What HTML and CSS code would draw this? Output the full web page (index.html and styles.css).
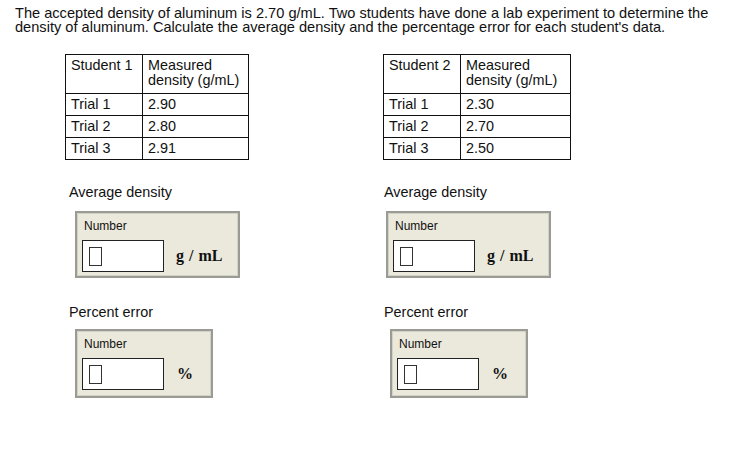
FILE: index.html
```html
<!DOCTYPE html>
<html>
<head>
<meta charset="utf-8">
<link rel="stylesheet" href="styles.css">
</head>
<body>
<p class="intro">The accepted density of aluminum is 2.70 g/mL. Two students have done a lab experiment to determine the density of aluminum. Calculate the average density and the percentage error for each student's data.</p>
<div class="columns">
  <div class="col">
    <table class="data">
      <tr><td class="c1">Student 1</td><td class="c2">Measured density (g/mL)</td></tr>
      <tr><td>Trial 1</td><td>2.90</td></tr>
      <tr><td>Trial 2</td><td>2.80</td></tr>
      <tr><td>Trial 3</td><td>2.91</td></tr>
    </table>
    <div class="label">Average density</div>
    <div class="panel">
      <div class="num">Number</div>
      <div class="row">
        <div class="input"><span class="caret"></span></div>
        <span class="unit">g / mL</span>
      </div>
    </div>
    <div class="label label--pct">Percent error</div>
    <div class="panel panel--pct">
      <div class="num">Number</div>
      <div class="row">
        <div class="input"><span class="caret"></span></div>
        <span class="unit unit--pct">%</span>
      </div>
    </div>
  </div>
  <div class="col col--right">
    <table class="data data--wide">
      <tr><td class="c1">Student 2</td><td class="c2">Measured density (g/mL)</td></tr>
      <tr><td>Trial 1</td><td>2.30</td></tr>
      <tr><td>Trial 2</td><td>2.70</td></tr>
      <tr><td>Trial 3</td><td>2.50</td></tr>
    </table>
    <div class="label">Average density</div>
    <div class="panel">
      <div class="num">Number</div>
      <div class="row">
        <div class="input"><span class="caret"></span></div>
        <span class="unit">g / mL</span>
      </div>
    </div>
    <div class="label label--pct">Percent error</div>
    <div class="panel panel--pct panel--shift">
      <div class="num">Number</div>
      <div class="row">
        <div class="input"><span class="caret"></span></div>
        <span class="unit unit--pct">%</span>
      </div>
    </div>
  </div>
</div>
</body>
</html>
```
FILE: styles.css
```css
html, body {
  margin: 0;
  background: #fff;
  color: #111;
  font-family: "Liberation Sans", Arial, sans-serif;
}
.intro {
  margin: 0;
  padding: 6px 15px 0 15px;
  font-size: 14.6px;
  line-height: 14px;
  width: 715px;
}
.columns {
  display: grid;
  grid-template-columns: 318px 1fr;
  padding-left: 65px;
  margin-top: 20px;
}
.col {
  display: flex;
  flex-direction: column;
  align-items: flex-start;
}
.data {
  border-collapse: collapse;
  font-size: 14.4px;
  line-height: 15px;
  width: 184px;
}
.data--wide { width: 188px; }
.data td {
  border: 1px solid #111;
  padding: 3px 5px;
  height: 15px;
  vertical-align: top;
}
.data tr:first-child td { padding-top: 3px; padding-bottom: 5px; }
.data .c1 { width: 66px; }
.label {
  font-size: 14.4px;
  line-height: 16px;
  margin: 24px 0 0 4px;
}
.label--pct { margin-top: 26px; }
.col--right .label { margin-left: 1px; }
.panel {
  margin: 11px 0 0 10px;
  background: #ebe9dc;
  border: 2px solid #9b9b95;
  box-shadow: inset 0 0 0 1px #d4d2c6;
  padding: 6px 16px 4px 5px;
}
.panel--pct {
  margin-top: 9px;
  padding-bottom: 6px;
}
.col--right .panel { margin-left: 3px; }
.col--right .panel--shift { margin-left: 7px; }
.num {
  font-size: 12px;
  line-height: 14px;
  padding-left: 2px;
  margin-bottom: 7px;
}
.row {
  display: flex;
  align-items: center;
  gap: 12px;
}
.input {
  height: 30px;
  background: #fff;
  border: 1px solid #222;
  display: flex;
  align-items: center;
  padding-left: 6px;
  box-sizing: content-box;
  width: 74px;
}
.caret {
  width: 11px;
  height: 17px;
  border: 1px solid #333;
}
.unit {
  font-family: "Liberation Serif", "Times New Roman", serif;
  font-weight: bold;
  font-size: 16px;
  word-spacing: 1px;
}
.unit--pct {
  padding-left: 1px;
  padding-right: 2px;
}
```
